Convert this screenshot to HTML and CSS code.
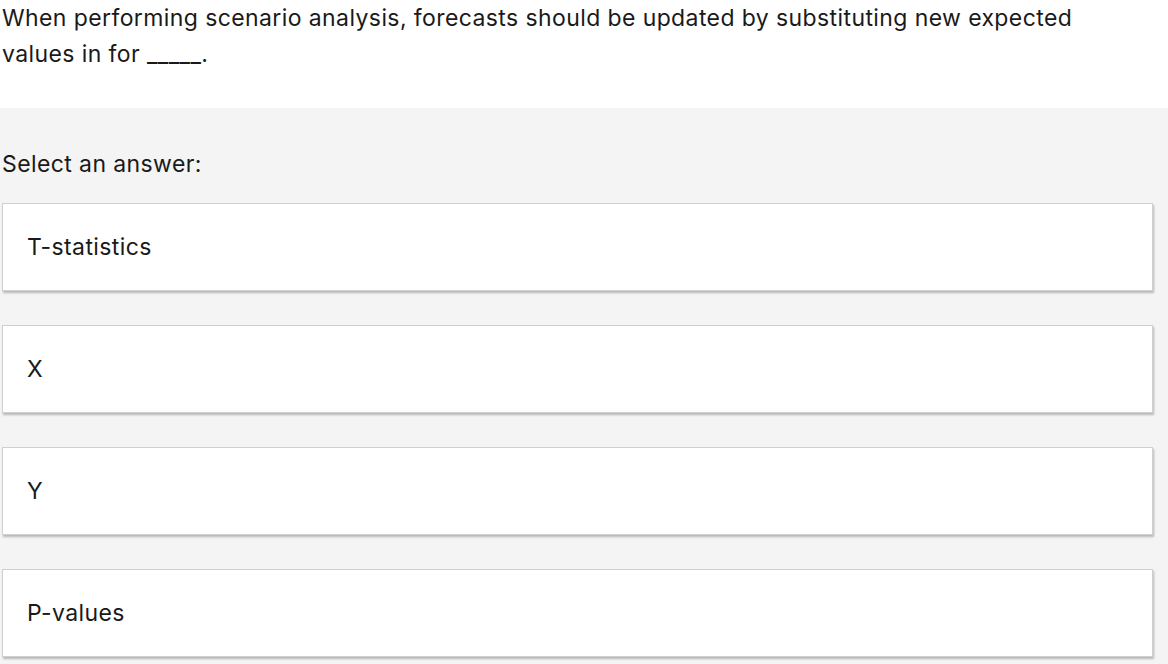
FILE: index.html
```html
<!DOCTYPE html>
<html>
<head>
<meta charset="utf-8">
<link rel="stylesheet" href="styles.css">
</head>
<body>
<div class="question">When performing scenario analysis, forecasts should be updated by substituting new expected values in for _____.</div>
<div class="answers">
  <div class="prompt">Select an answer:</div>
  <div class="card">T-statistics</div>
  <div class="card">X</div>
  <div class="card">Y</div>
  <div class="card">P-values</div>
</div>
</body>
</html>
```
FILE: styles.css
```css
html, body {
  margin: 0;
  padding: 0;
  background: #fff;
}
body {
  font-family: Inter, "Noto Sans", sans-serif;
  color: #1a1a1a;
  width: 1168px;
  letter-spacing: 0.4px;
}
.question {
  font-size: 23px;
  line-height: 36px;
  padding: 0 80px 0 2px;
  height: 108px;
  box-sizing: border-box;
}
.answers {
  background: #f4f4f4;
  padding: 41px 15px 8px 2px;
  display: flex;
  flex-direction: column;
  gap: 34px;
}
.prompt {
  font-size: 23px;
  line-height: 30px;
  margin-bottom: -10px;
}
.card {
  background: #fff;
  border: 1px solid #d0d0d0;
  box-shadow: 1px 2px 2px rgba(0,0,0,0.25);
  height: 86px;
  box-sizing: content-box;
  display: flex;
  align-items: center;
  padding-left: 24px;
  font-size: 23px;
}
```
